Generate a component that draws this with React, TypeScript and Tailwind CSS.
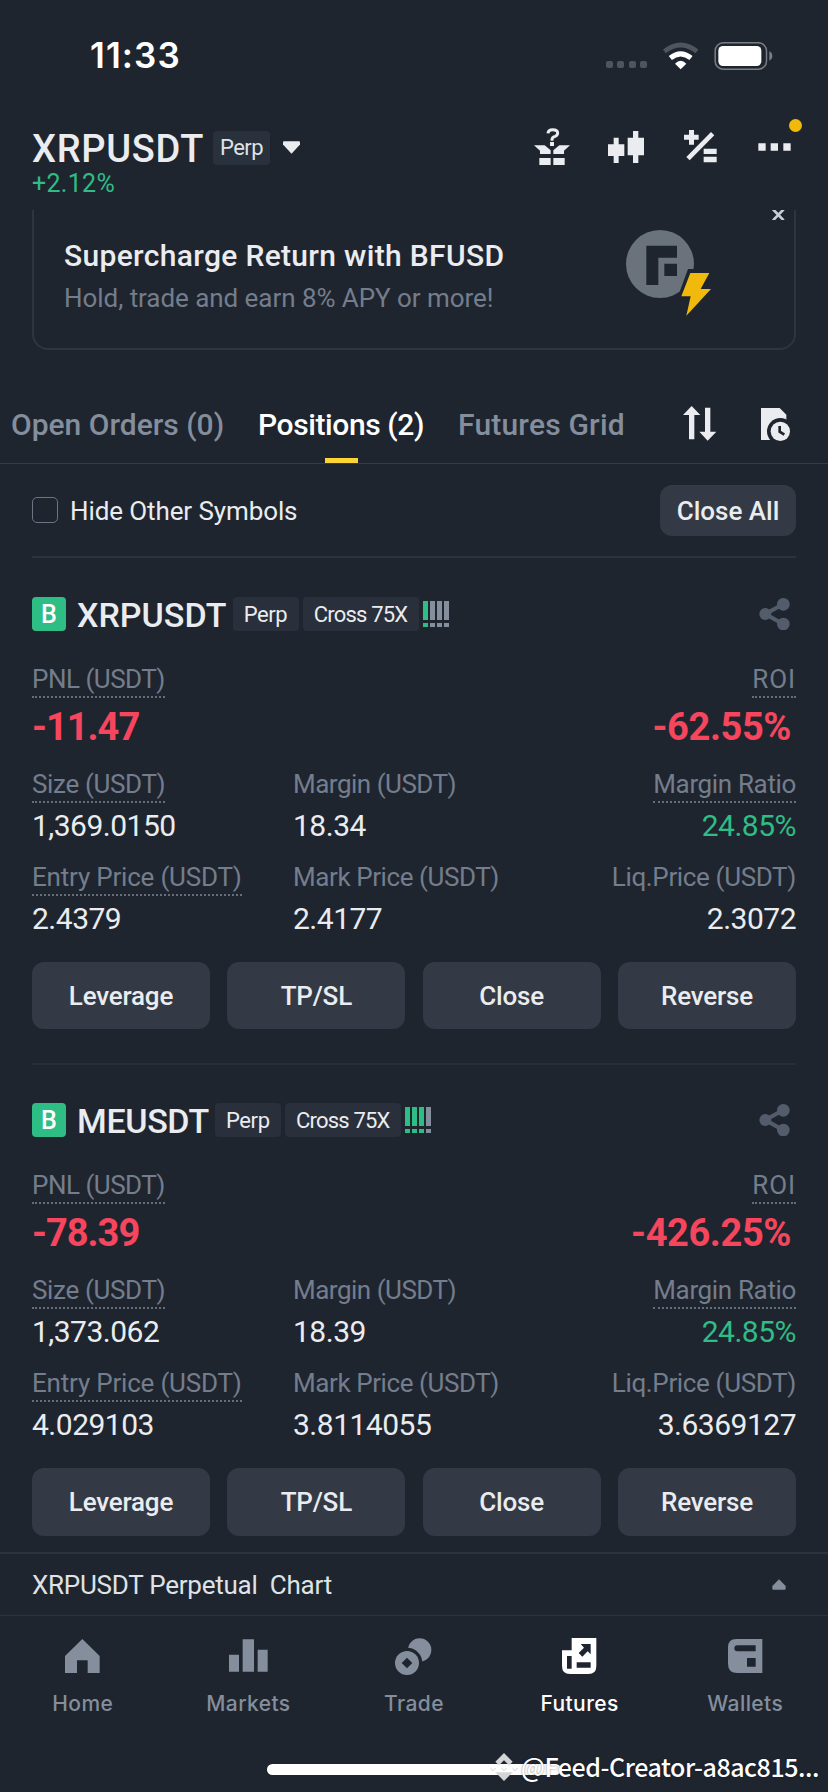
import type { ReactNode } from 'react'
import clsx from 'clsx'

type Position = {
  symbol: string
  tracking: string
  risk: number
  pnl: string
  roi: string
  size: string
  margin: string
  ratio: string
  entry: string
  mark: string
  liq: string
}

const positions: Position[] = [
  {
    symbol: 'XRPUSDT',
    tracking: 'tracking-[0px]',
    risk: 1,
    pnl: '-11.47',
    roi: '-62.55%',
    size: '1,369.0150',
    margin: '18.34',
    ratio: '24.85%',
    entry: '2.4379',
    mark: '2.4177',
    liq: '2.3072',
  },
  {
    symbol: 'MEUSDT',
    tracking: 'tracking-[-0.35px]',
    risk: 3,
    pnl: '-78.39',
    roi: '-426.25%',
    size: '1,373.062',
    margin: '18.39',
    ratio: '24.85%',
    entry: '4.029103',
    mark: '3.8114055',
    liq: '3.6369127',
  },
]

function StatusBar() {
  return (
    <div className="flex h-[111px] items-center pr-[55px] pl-[90px] font-['Inter',sans-serif]">
      <span className="flex-1 text-[35px] leading-none font-semibold tracking-[1.1px] text-white">11:33</span>
      <div className="mt-[18px] mr-[16px] flex gap-[4.4px]">
        {[0, 1, 2, 3].map((i) => (
          <span key={i} className="size-[7px] rounded-[2px] bg-[#4f555e]" />
        ))}
      </div>
      <svg className="mr-[15px]" width="36" height="28" viewBox="746 124 108 84" fill="none">
        <path d="M750 152Q799 114 848 152" stroke="#4f555e" strokeWidth="14" />
        <path d="M768 172Q799 147 830 172" stroke="#fff" strokeWidth="15" />
        <path d="M782 189Q799 172 816 189L799 206z" fill="#fff" />
      </svg>
      <svg width="59" height="28" viewBox="899 123 177 84" fill="none">
        <rect x="902.5" y="125.5" width="154" height="79" rx="24" stroke="#7a7f86" strokeWidth="4.5" />
        <rect x="912" y="135" width="129" height="60" rx="14" fill="#fff" />
        <path d="M1065 151q9 4 9 14t-9 14z" fill="#7a7f86" />
      </svg>
    </div>
  )
}

function Header() {
  return (
    <header className="flex h-[99px] items-start pl-[32px]">
      <div className="flex-1 pt-[18px]">
        <div className="flex h-[37px] items-center">
          <h1 className="mt-[3px] text-[38px] leading-[37px] font-medium tracking-[0.7px] text-[#eaecef]">XRPUSDT</h1>
          <span className="ml-[9px] flex h-[34px] w-[57px] items-center justify-center rounded-[4px] bg-[#29313d] text-[22px] tracking-[-0.5px] text-[#dfe2e7]">
            Perp
          </span>
          <svg className="ml-[13px]" width="17" height="13" viewBox="849 420 52 38">
            <path d="M852 420h46q3 0 3 4v6l-26 28-26-28v-6q0-4 3-4z" fill="#eaecef" />
          </svg>
        </div>
        <div className="mt-[5px] text-[25px] leading-[26px] tracking-[0.3px] text-[#2ebd85]">+2.12%</div>
      </div>
      <div className="relative flex w-[294px] pt-[17px]" aria-label="tools">
        <svg className="mr-[38px]" width="36" height="37" viewBox="360 384 108 111" fill="#eaecef">
          <path d="M402 400q1-11 14-11 15 0 15 10 0 7-8 10-9 3-9 10v3" fill="none" stroke="#eaecef" strokeWidth="9" />
          <path d="M408 426h12v12h-12zM360 436h32l18 15v11h-32v-10zM468 436h-32l-18 15v11h32v-10zM376 474h34v21h-34zM418 474h34v21h-34z" />
        </svg>
        <svg className="mt-[2.5px] mr-[40px]" width="36" height="32" viewBox="583 392 108 96" fill="#eaecef">
          <path d="M583 432h17v-20h15v20h17v35h-17v21h-15v-21h-17zM642 412h16v-20h16v20h17v53h-17v23h-16v-23h-16z" />
        </svg>
        <svg className="mt-[2px] mr-[41px]" width="33" height="33" viewBox="811 391 99 99" fill="#eaecef">
          <path d="M826 391h15v14h14v15h-14v15h-15v-15h-15v-15h15zM870 447h39v16h-39zM870 471h39v17h-39z" />
          <path d="M823 477l74-75" stroke="#eaecef" strokeWidth="14" />
        </svg>
        <svg className="mt-[15px]" width="33" height="8" viewBox="1033 428 99 24" fill="#eaecef">
          <path d="M1034 429h22v22h-22zM1071 429h22v22h-22zM1109 429h22v22h-22z" />
        </svg>
        <span className="absolute top-[8px] left-[255px] size-[13px] rounded-full bg-[#f0b90b]" />
      </div>
    </header>
  )
}

function Banner() {
  return (
    <section className="relative mx-[32px] flex h-[140px] rounded-b-[16px] border-x-2 border-b-2 border-[#2e353f] pl-[30px]">
      <div className="flex-1 pt-[28px]">
        <p className="text-[30px] leading-[36px] font-medium tracking-[0.33px] text-[#eaecef]">Supercharge Return with BFUSD</p>
        <p className="mt-[9px] text-[26px] leading-[30px] tracking-[-0.05px] text-[#747d8c]">Hold, trade and earn 8% APY or more!</p>
      </div>
      <svg className="mt-[20px] mr-[82px]" width="86" height="86" viewBox="636 90 258 258">
        <circle cx="738" cy="192" r="102" fill="#6a727c" />
        <path d="M697 137h92v36h-56v82h-36zM751 191h38v37h-38zM822 207h30v93h-64z" fill="#1f252f" />
        <path d="M829 219h57l-26 48h31l-74 80 13-58h-28z" fill="#f0b90b" />
      </svg>
      <svg className="absolute top-0 right-[9px]" width="13" height="10" viewBox="1076 30 39 30">
        <path d="M1079 28l32 33M1111 28l-32 33" stroke="#c9ced6" strokeWidth="8" />
      </svg>
    </section>
  )
}

function Tabs() {
  return (
    <nav className="mt-[36px] flex h-[78px] items-center border-b border-[#333b47] pl-[11px] text-[30px] font-medium text-[#848e9c]">
      <span className="w-[247px]">Open Orders (0)</span>
      <span className="relative flex h-full w-[200px] items-center tracking-[-0.4px] text-white">
        Positions (2)
        <i className="absolute bottom-0 left-[67px] h-[5px] w-[33px] bg-[#fcd535]" />
      </span>
      <span className="w-[225px] tracking-[0.2px]">Futures Grid</span>
      <svg className="mb-[2px]" width="34" height="35" viewBox="808 620 102 105" fill="#eaecef">
        <path d="M834 620l26 27h-18v73h-16v-73h-18zM874 625h16v72h18l-26 27-25-27h17z" />
      </svg>
      <svg className="mb-px ml-[44px]" width="30" height="33" viewBox="1041 624 90 99">
        <path d="M1041 624h56l20 20v76h-76z" fill="#eaecef" />
        <circle cx="1099" cy="694" r="40" fill="#1f252f" />
        <circle cx="1099" cy="694" r="29" fill="#eaecef" />
        <path d="M1097 678v17l14 9" fill="none" stroke="#1f252f" strokeWidth="8" />
      </svg>
    </nav>
  )
}

function FilterRow() {
  return (
    <div className="mx-[32px] flex h-[94px] items-center border-b-2 border-[#2c333d]">
      <span className="size-[26px] rounded-[5px] border-[1.5px] border-[#6c7583]" />
      <span className="mt-[2px] ml-[12px] flex-1 text-[26px] tracking-[-0.1px] text-[#eaecef]">Hide Other Symbols</span>
      <button className="h-[51px] w-[136px] rounded-[12px] bg-[#333a45] pt-[2px] text-[26px] font-medium text-[#eaecef]">Close All</button>
    </div>
  )
}

function Label({ children, dotted, className }: { children: ReactNode; dotted?: boolean; className?: string }) {
  return (
    <div className="h-[32px]">
      <span
        className={clsx(
          'inline-block border-b-2 pb-[4px] text-[26px] leading-[26px] text-[#747d8c]',
          dotted ? 'border-dotted border-[#666e7b]' : 'border-transparent',
          className ?? 'tracking-[-0.35px]',
        )}
      >
        {children}
      </span>
    </div>
  )
}

type StatProps = {
  label: string
  value: string
  dotted?: boolean
  className?: string
  labelClass?: string
  valueClass?: string
}

function Stat({ label, value, dotted, className, labelClass, valueClass }: StatProps) {
  return (
    <div className={clsx('whitespace-nowrap', className)}>
      <Label dotted={dotted} className={labelClass}>
        {label}
      </Label>
      <div className={clsx('mt-[8px] text-[30px] leading-[30px] tracking-[-0.5px]', valueClass)}>{value}</div>
    </div>
  )
}

function Risk({ level }: { level: number }) {
  return (
    <div className="ml-[4px] flex gap-[2px]">
      {[0, 1, 2, 3].map((i) => (
        <div key={i} className="flex flex-col gap-[3px]">
          <i className={clsx('h-[19px] w-[5px]', i < level ? 'bg-[#2ebd85]' : 'bg-[#848e9c]')} />
          <i className={clsx('h-[4px] w-[5px]', i < level ? 'bg-[#2ebd85]' : 'bg-[#848e9c]')} />
        </div>
      ))}
    </div>
  )
}

function PositionCard({ p, last }: { p: Position; last: boolean }) {
  return (
    <article
      className={clsx('mx-[32px] h-[506.5px] border-b-2 pt-[38.5px] text-[#eaecef]', last ? 'border-transparent' : 'border-[#272e38]')}
    >
      <div className="flex h-[34px] items-center">
        <span className="flex size-[34px] items-center justify-center rounded-[4px] bg-[#2ebd85] pt-[2px] text-[25px] font-medium text-white">
          B
        </span>
        <h2 className={clsx('mt-[2px] ml-[11px] text-[34px] leading-[34px] font-medium', p.tracking)}>{p.symbol}</h2>
        <span className="ml-[6px] flex h-[34px] w-[66px] items-center justify-center rounded-[4px] bg-[#29303c] pt-px text-[22px] tracking-[-0.4px]">
          Perp
        </span>
        <span className="ml-[4px] flex h-[34px] w-[116px] items-center justify-center rounded-[4px] bg-[#29303c] pt-px text-[22px] tracking-[-0.8px]">
          Cross 75X
        </span>
        <Risk level={p.risk} />
        <svg className="mr-[6px] ml-auto" width="31" height="32" viewBox="1034 383 93 96" fill="#535c6a">
          <path d="M1106 402l-53 29 53 30" fill="none" stroke="#535c6a" strokeWidth="12" />
          <circle cx="1053" cy="431" r="18" />
          <circle cx="1107" cy="402" r="19" />
          <circle cx="1107" cy="461" r="19" />
        </svg>
      </div>

      <div className="mt-[35px] flex justify-between">
        <div>
          <Label dotted className="tracking-[-0.5px]">
            PNL (USDT)
          </Label>
          <div className="mt-[12px] text-[38px] leading-[34px] font-bold tracking-[-1px] text-[#f6465d]">{p.pnl}</div>
        </div>
        <div className="text-right">
          <Label dotted className="tracking-[0.9px]">
            ROI
          </Label>
          <div className="mt-[12px] mr-[5px] text-[38px] leading-[34px] font-bold tracking-[-0.4px] text-[#f6465d]">{p.roi}</div>
        </div>
      </div>

      <div className="mt-[27px] grid grid-cols-[261px_261px_1fr] gap-y-[23px]">
        <Stat dotted label="Size (USDT)" value={p.size} />
        <Stat label="Margin (USDT)" labelClass="tracking-[-0.5px]" value={p.margin} />
        <Stat dotted className="text-right" label="Margin Ratio" value={p.ratio} valueClass="text-[#2ebd85]" />
        <Stat dotted label="Entry Price (USDT)" labelClass="tracking-[-0.2px]" value={p.entry} />
        <Stat label="Mark Price (USDT)" labelClass="tracking-[-0.42px]" value={p.mark} />
        <Stat className="text-right" label="Liq.Price (USDT)" value={p.liq} />
      </div>

      <div className="mt-[28px] grid grid-cols-4 gap-[17.3px]">
        {['Leverage', 'TP/SL', 'Close', 'Reverse'].map((t) => (
          <button key={t} className="h-[67.5px] rounded-[12px] bg-[#333a45] pt-[2px] text-[26px] font-medium tracking-[-0.2px]">
            {t}
          </button>
        ))}
      </div>
    </article>
  )
}

const navItems = [
  {
    label: 'Home',
    icon: (
      <svg width="35" height="34" viewBox="195 327 105 102" fill="currentColor">
        <path d="M247 327l52 51v51h-36v-38h-32v38h-36v-51z" />
      </svg>
    ),
  },
  {
    label: 'Markets',
    icon: (
      <svg width="39" height="34" viewBox="685 325 117 102" fill="currentColor">
        <path d="M685 372h30v51h-30zM726 326h34v97h-34zM771 357h30v66h-30z" />
      </svg>
    ),
  },
  {
    label: 'Trade',
    icon: (
      <svg width="37" height="37" viewBox="1185 322 111 111" fill="currentColor">
        <circle cx="1259" cy="358" r="35" />
        <circle cx="1221" cy="397" r="46" fill="#1f252f" />
        <circle cx="1221" cy="397" r="36" />
        <path d="M1221 381l16 16-16 16-16-16z" fill="#1f252f" />
      </svg>
    ),
  },
  {
    label: 'Futures',
    active: true,
    icon: (
      <svg width="35" height="36" viewBox="443 321 105 108" fill="currentColor">
        <path d="M472 321h74v84q0 24-24 24h-55q-24 0-24-24v-47h29z" />
        <path d="M458 375h14v38h-14zM487 394h42v16h-42zM499 339h30v31l-9-9-16 16-11-11 16-16z" fill="#1f252f" />
      </svg>
    ),
  },
  {
    label: 'Wallets',
    icon: (
      <svg width="35" height="34" viewBox="940 327 105 102" fill="currentColor">
        <path d="M965 327h78v102h-75q-28 0-28-28v-49q0-25 25-25z" />
        <path d="M968 346h55v18h-55a9 9 0 0 1 0-18zM997 384h26v26h-26z" fill="#1f252f" />
      </svg>
    ),
  },
]

function BottomNav() {
  return (
    <footer className="relative h-[177px] border-t border-[#2c333d] font-['Inter',sans-serif]">
      <div className="grid grid-cols-5">
        {navItems.map((n) => (
          <div key={n.label} className={clsx('flex flex-col items-center', n.active ? 'text-white' : 'text-[#848e9c]')}>
            <div className="mt-[21px] flex h-[38px] items-center">{n.icon}</div>
            <span className="mt-[15px] text-[21px] leading-[28px] font-medium tracking-[0.4px]">{n.label}</span>
          </div>
        ))}
      </div>
      <div className="absolute top-[148px] left-[267px] h-[11px] w-[294px] rounded-full bg-white" />
      <div className="absolute top-[133px] right-[9px] flex items-center">
        <svg className="mt-[2px] mr-[3px]" width="28" height="28" viewBox="228 672 84 84" fill="#d4d5d7">
          <path d="M270 672l26 26-11 11-15-15-15 15-11-11zM244 730h52l-26 26z" />
          <path d="M229 717l8 8 8-8M262 717l8 8 8-8M295 717l8 8 8-8" fill="none" stroke="#b5b7ba" strokeWidth="2" />
        </svg>
        <span className="font-['Noto_Sans_CJK_SC',sans-serif] text-[25px] leading-[34px] font-medium tracking-[-0.45px] whitespace-nowrap text-white [text-shadow:0_0_2px_#0008]">
          @Feed-Creator-a8ac815...
        </span>
      </div>
    </footer>
  )
}

export default function App() {
  return (
    <div className="flex h-[1792px] w-[828px] flex-col overflow-hidden bg-[#1f252f] font-['Roboto',sans-serif]">
      <StatusBar />
      <Header />
      <Banner />
      <Tabs />
      <FilterRow />
      <main className="h-[994px] shrink-0 overflow-hidden">
        {positions.map((p, i) => (
          <PositionCard key={p.symbol} p={p} last={i === positions.length - 1} />
        ))}
      </main>
      <div className="flex h-[63px] shrink-0 items-center border-t-2 border-[#2c333d] px-[32px] text-[26px] text-[#dfe2e7]">
        <span className="mt-px flex-1 tracking-[-0.25px] whitespace-pre">XRPUSDT Perpetual  Chart</span>
        <svg className="mr-[10px]" width="14" height="11" viewBox="1074 146 42 33">
          <path d="M1095 147l20 20v8q0 3-3 3h-34q-3 0-3-3v-8z" fill="#848e9c" />
        </svg>
      </div>
      <BottomNav />
    </div>
  )
}
